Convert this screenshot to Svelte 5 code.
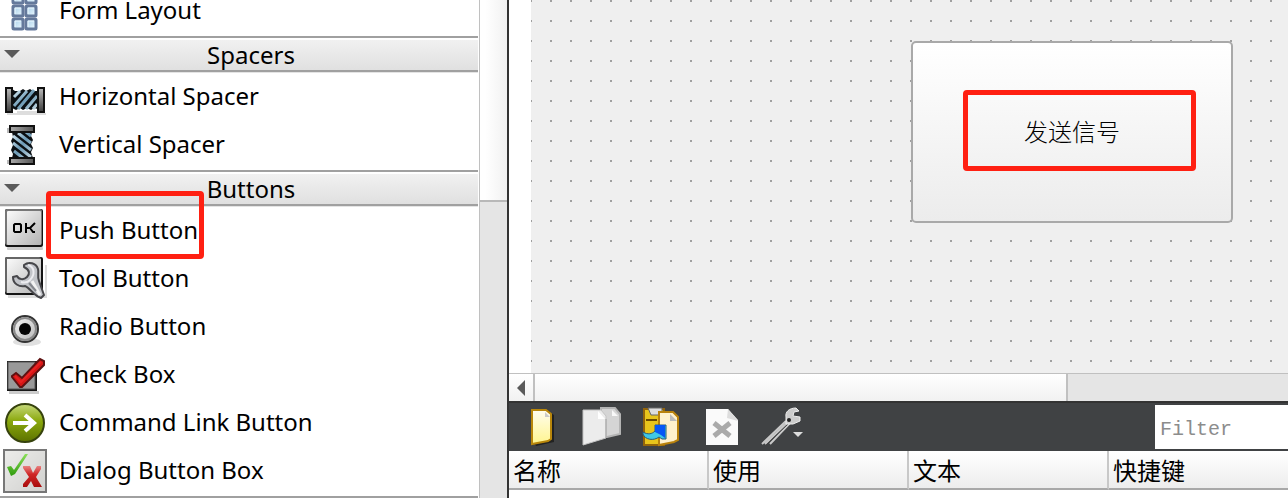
<script lang="ts">
	type WidgetItem = {
		icon: string;
		label: string;
		marked?: boolean;
	};

	type WidgetGroup = {
		title: string;
		items: WidgetItem[];
	};

	const groups: WidgetGroup[] = [
		{
			title: 'Spacers',
			items: [
				{ icon: 'hspacer', label: 'Horizontal Spacer' },
				{ icon: 'vspacer', label: 'Vertical Spacer' }
			]
		},
		{
			title: 'Buttons',
			items: [
				{ icon: 'push', label: 'Push Button', marked: true },
				{ icon: 'tool', label: 'Tool Button' },
				{ icon: 'radio', label: 'Radio Button' },
				{ icon: 'check', label: 'Check Box' },
				{ icon: 'command', label: 'Command Link Button' },
				{ icon: 'dialog', label: 'Dialog Button Box' }
			]
		}
	];

	const actions = ['new', 'copy', 'paste', 'delete', 'configure'];
	const columns = ['名称', '使用', '文本', '快捷键'];

	let filter = $state('');
	let collapsed = $state<Record<string, boolean>>({});
</script>

<svg class="defs" aria-hidden="true">
	<defs>
		<linearGradient id="metal" x1="0" y1="0" x2="0" y2="1">
			<stop offset="0" stop-color="#bbb" /><stop offset="1" stop-color="#3c3c3c" />
		</linearGradient>
		<linearGradient id="metalH" x1="0" y1="0" x2="1" y2="0">
			<stop offset="0" stop-color="#aaa" /><stop offset="1" stop-color="#555" />
		</linearGradient>
		<linearGradient id="coil" x1="0" y1="0" x2="1" y2="1">
			<stop offset="0" stop-color="#d7e9f2" /><stop offset="0.5" stop-color="#6c9ab6" /><stop offset="1" stop-color="#c2d6e0" />
		</linearGradient>
		<linearGradient id="face" x1="0" y1="0" x2="1" y2="1">
			<stop offset="0" stop-color="#fafafa" /><stop offset="1" stop-color="#b4b4b4" />
		</linearGradient>
		<linearGradient id="tile" x1="0" y1="0" x2="1" y2="1">
			<stop offset="0" stop-color="#a3cde9" /><stop offset="1" stop-color="#eefaff" />
		</linearGradient>
		<linearGradient id="green" x1="0" y1="0" x2="0" y2="1">
			<stop offset="0" stop-color="#c6d97c" /><stop offset="0.45" stop-color="#8aa80c" /><stop offset="1" stop-color="#5c7200" />
		</linearGradient>
		<linearGradient id="paper" x1="0" y1="0" x2="0" y2="1">
			<stop offset="0" stop-color="#fffdf0" /><stop offset="1" stop-color="#fff58e" />
		</linearGradient>
		<linearGradient id="tick" x1="0" y1="0" x2="0" y2="1">
			<stop offset="0" stop-color="#8be05a" /><stop offset="1" stop-color="#2f9a0c" />
		</linearGradient>
		<linearGradient id="cross" x1="0" y1="0" x2="0" y2="1">
			<stop offset="0" stop-color="#e88080" /><stop offset="0.4" stop-color="#cf2626" /><stop offset="1" stop-color="#a90d0d" />
		</linearGradient>
	</defs>
</svg>

{#snippet widgetIcon(name: string)}
	<svg class="widget-icon" viewBox="0 0 44 44" aria-hidden="true">
		{#if name === 'form'}
			{#each [3, 16, 29] as y}
				{#each [9, 22] as x}
					<rect x={x + 1} y={y + 1} width="10" height="10" rx="1" fill="url(#tile)" stroke="#64799b" stroke-width="3" />
					<path d="M{x + 3} {y + 9}V{y + 3}H{x + 9}" fill="none" stroke="#eefaff" stroke-width="1" />
				{/each}
			{/each}
		{:else if name === 'hspacer'}
			<path d="M4 38H14V36H34V38H43V40H4z" fill="#bbb" opacity="0.5" />
			<path d="M9 14l3 2h5l3-2 3 2 4-2 3 2h5v18l-4-1-3 2-4-2-4 2-3-2-4 2-4-2z" fill="#0b1014" />
			<path d="M11 22l6-6M11 31L24 16M15 34L31 15M23 34L34 21M30 34l4-5" stroke="url(#coil)" stroke-width="3" />
			<rect x="3" y="13" width="6" height="24" fill="url(#metal)" stroke="#111" stroke-width="2" />
			<rect x="35" y="13" width="6" height="24" fill="url(#metal)" stroke="#111" stroke-width="2" />
		{:else if name === 'vspacer'}
			<path d="M4 5H6V10H4zM4 37H6V41H4z" fill="#bbb" />
			<path d="M9 9H29l-1 4 2 4-2 4 2 4-2 4 2 6H9l1-4-2-4 2-5-2-4 2-4z" fill="#0b1014" />
			<path d="M10 13l18 14M10 20l18 14M11 28l9 7M15 10l13 10M23 9l5 4" stroke="url(#coil)" stroke-width="3" />
			<rect x="7" y="3" width="24" height="6" fill="url(#metalH)" stroke="#111" stroke-width="2" />
			<rect x="7" y="35" width="24" height="6" fill="url(#metalH)" stroke="#111" stroke-width="2" />
		{:else if name === 'push'}
			<rect x="4" y="38" width="36" height="3" rx="1" fill="#ccc" />
			<rect x="2" y="0" width="38" height="38" rx="2" fill="#151515" />
			<rect x="2" y="0" width="37" height="36" rx="2" fill="#777" />
			<rect x="4" y="2" width="34" height="34" rx="1" fill="url(#face)" />
			<path d="M12 15h5l1 1v6l-1 1h-5l-1-1v-6zM23 14v10M32 14l-5 5h-4M27 19l3 4h2" fill="none" stroke="#000" stroke-width="2" />
		{:else if name === 'tool'}
			<path d="M5 38H42V8h2V41H5z" fill="#ddd" />
			<rect x="2" y="0" width="38" height="38" rx="2" fill="#151515" />
			<rect x="2" y="0" width="36" height="36" rx="2" fill="#666" />
			<rect x="4" y="2" width="34" height="34" fill="url(#face)" />
			<path d="M21 8c5-4 12-2 14 4 1 4-1 8 1 12l5 14-3 3c-7-2-11-10-16-12-6 1-12-2-12-9l4-1c2 4 7 4 10 1 3-3 3-7-3-10z" fill="#c2c4c9" stroke="#47474b" stroke-width="2" stroke-linejoin="round" />
			<path d="M25 8c7 2 7 10 2 15-3 3-6 3-9 2" fill="none" stroke="#ececf0" stroke-width="2" />
			<path d="M29 24l8 14" stroke="#f2f2f2" stroke-width="3" />
			<path d="M26 26l7 8" stroke="#85878d" stroke-width="2" />
		{:else if name === 'radio'}
			<ellipse cx="24" cy="37" rx="14" ry="4" fill="#e0e0e0" />
			<circle cx="22" cy="24" r="13" fill="url(#face)" stroke="#333" stroke-width="2" />
			<circle cx="22" cy="24" r="11" fill="none" stroke="#8a8a8a" stroke-width="2" />
			<circle cx="22" cy="24" r="6" fill="#050505" />
		{:else if name === 'check'}
			<rect x="6" y="38" width="30" height="3" fill="#ccc" />
			<rect x="4" y="8" width="30" height="30" fill="#181818" />
			<rect x="5" y="9" width="27" height="27" fill="#999" stroke="#555" stroke-width="1" />
			<path d="M9 23l4-3 6 5L37 6l4 2v4L19 34h-2L9 24z" fill="#d51616" stroke="#5e1212" stroke-width="2" />
			<path d="M12 23l6 6L38 9" fill="none" stroke="#e82222" stroke-width="2" />
		{:else if name === 'command'}
			<circle cx="22" cy="22" r="19" fill="url(#green)" stroke="#36420d" stroke-width="2" />
			<path d="M10 22H30M22 14l9 8-9 8" fill="none" stroke="#fff" stroke-width="4" />
		{:else if name === 'dialog'}
			<rect x="1" y="1" width="42" height="42" fill="url(#face)" stroke="#777" stroke-width="2" />
			<rect x="2" y="2" width="40" height="40" fill="#e2e2df" opacity="0.6" />
			<path d="M4 18l4-1 3 4L22 5h3L12 25l-4 2z" fill="url(#tick)" />
			<path d="M20 17h7l3 7 4-7h4v3l-5 8 6 10h-8l-3-6-4 6h-4v-3l6-7-6-9z" fill="url(#cross)" />
		{/if}
	</svg>
{/snippet}

{#snippet actionIcon(name: string)}
	<svg class="action-icon" viewBox="0 0 40 40" aria-hidden="true">
		{#if name === 'new'}
			<path d="M29 6l3 2v27L14 39l-1-2z" fill="#222" />
			<path d="M10 3h14l5 4v25l-3 2-16 3z" fill="url(#paper)" stroke="#b8860b" stroke-width="2" />
			<path d="M23 5v5h5z" fill="#c9c9c9" />
		{:else if name === 'copy'}
			<path d="M19 1h14l5 6v20l-13 3h-6z" fill="#d5d5d5" stroke="#b4b4b4" stroke-width="2" />
			<path d="M30 3v6h6z" fill="#f8f8f8" />
			<path d="M1 3h18l5 6v22L1 38z" fill="#ececec" stroke="#c4c4c4" stroke-width="1" />
			<path d="M16 4v8h7z" fill="#fff" />
			<path d="M24 12v19" stroke="#a0a0a0" stroke-width="1" />
		{:else if name === 'paste'}
			<path d="M2 2h20v36H2z" fill="#e8c51c" stroke="#94650a" stroke-width="2" />
			<path d="M6 1h14v7H9z" fill="#ddd" stroke="#666" stroke-width="1" />
			<path d="M4 12h11v2H4z" fill="#6b4a00" />
			<path d="M17 5h14l5 5v23l-4 2-15 3z" fill="#fff1cd" stroke="#b9820d" stroke-width="2" />
			<path d="M28 7v7h7z" fill="#bbb" />
			<path d="M1 25c5 3 9 2 12-1v-6h11v14h-4l-3-2c-5 4-14 3-16-3z" fill="#3fc8e6" stroke="#285b78" stroke-width="1" />
			<path d="M13 18h10v13l-4-3-6-3z" fill="#0757f5" />
		{:else if name === 'delete'}
			<path d="M4 2H26L36 13V38H4z" fill="#fafafa" />
			<path d="M26 2l-1 9 11 3z" fill="#ddd" />
			<path d="M12 16l16 13M28 16L12 29" stroke="#aaa" stroke-width="5" />
		{:else if name === 'configure'}
			<path d="M0 37L24 14M8 37l20-21M3 37L26 15" fill="none" stroke="#c8c8c8" stroke-width="2" />
			<path d="M4 38L26 17" fill="none" stroke="#444" stroke-width="1" />
			<path d="M24 10c-1-5 3-9 10-9l3 3-5 1-1 4 7 1v4l-7 3h-7z" fill="#ccc" stroke="#eee" stroke-width="1" />
			<circle cx="27" cy="13" r="2" fill="#222" />
			<path d="M31 25h10l-5 5z" fill="#ddd" />
		{/if}
	</svg>
{/snippet}

{#snippet widgetRow(item: WidgetItem)}
	<li class="widget-row">
		{@render widgetIcon(item.icon)}
		<span>{item.label}</span>
		{#if item.marked}
			<i class="mark row-mark"></i>
		{/if}
	</li>
{/snippet}

<div class="designer">
	<aside class="widget-box">
		<div class="widget-scroll">
			<ul class="scrolled">
				{@render widgetRow({ icon: 'form', label: 'Form Layout' })}
			</ul>
			{#each groups as group}
				<button
					type="button"
					class="group-header"
					aria-expanded={!collapsed[group.title]}
					onclick={() => (collapsed[group.title] = !collapsed[group.title])}
				>
					<svg viewBox="0 0 16 8" aria-hidden="true"><path d="M0 0H16L8 8z" /></svg>
					<span>{group.title}</span>
				</button>
				{#if !collapsed[group.title]}
					<ul>
						{#each group.items as item}
							{@render widgetRow(item)}
						{/each}
					</ul>
				{/if}
			{/each}
			<div class="group-header"></div>
		</div>
		<div class="vbar"><div class="vbar-thumb"></div></div>
	</aside>

	<main class="workspace">
		<div class="form-view">
			<div class="form-canvas">
				<button type="button" class="form-button">
					发送信号
					<i class="mark button-mark"></i>
				</button>
			</div>
		</div>
		<div class="hbar">
			<button type="button" class="hbar-arrow" aria-label="Scroll left">
				<svg viewBox="0 0 8 16" aria-hidden="true"><path d="M8 0V16L0 8z" /></svg>
			</button>
			<div class="hbar-thumb"></div>
			<div class="hbar-track"></div>
		</div>
		<div class="action-toolbar">
			{#each actions as action}
				<button type="button" class="action" aria-label={action}>
					{@render actionIcon(action)}
				</button>
			{/each}
			<input type="text" placeholder="Filter" aria-label="Filter" bind:value={filter} />
		</div>
		<table class="action-table">
			<thead>
				<tr>
					{#each columns as column}
						<th scope="col">{column}</th>
					{/each}
				</tr>
			</thead>
		</table>
	</main>
</div>

<style>
	:global(body) { margin: 0; background: #ffffff; }
	.defs { position: absolute; width: 0; height: 0; }
	button { padding: 0; border: 0; background: none; color: #000000; font: inherit; }
	ul { margin: 0; padding: 1px 0; list-style: none; }

	.designer {
		display: flex;
		height: 100vh;
		overflow: hidden;
		color: #000000;
		font-family: 'Noto Sans', 'Noto Sans CJK SC', sans-serif;
		font-size: 24px;
	}

	.widget-box { display: flex; flex: 0 0 507px; border-right: 2px solid #333333; }
	.widget-scroll { flex: 1; min-width: 0; overflow: hidden; padding-right: 1px; }
	.scrolled { margin-top: -14px; }
	.group-header {
		position: relative;
		display: flex;
		align-items: center;
		justify-content: center;
		width: 100%;
		height: 36px;
		padding-left: 24px;
		box-sizing: border-box;
		border-top: 2px solid #a0a0a0;
		border-bottom: 2px solid #a0a0a0;
		background: linear-gradient(#f2f2f2, #e0e0e0);
		box-shadow: inset 0 2px #ffffff, 0 1px #e4e4e4;
	}
	.group-header svg { position: absolute; left: 4px; top: 12px; width: 16px; height: 8px; fill: #5a5a5a; }
	.widget-row {
		position: relative;
		display: flex;
		align-items: center;
		gap: 12px;
		height: 48px;
		padding-left: 3px;
		line-height: 24px;
		white-space: nowrap;
	}
	.widget-row span { padding-bottom: 2px; }
	.widget-icon { flex: none; width: 44px; height: 44px; }
	.vbar { flex: 0 0 27px; border-left: 1px solid #c0c0c0; background: #e5e5e5; }
	.vbar-thumb { height: 200px; border-bottom: 2px solid #b8b8b8; background: linear-gradient(90deg, #ffffff 20%, #f1f1f1); }

	.mark { position: absolute; box-sizing: border-box; border: 5px solid #ff2012; border-radius: 4px; pointer-events: none; }
	.row-mark { left: 46px; top: -16px; width: 158px; height: 68px; }
	.button-mark { left: 50px; top: 47px; width: 233px; height: 81px; }

	.workspace { display: flex; flex: 1; flex-direction: column; min-width: 0; }
	.form-view { flex: 1; min-height: 0; padding-left: 22px; background: #ffffff; }
	.form-canvas {
		position: relative;
		height: 100%;
		overflow: hidden;
		background: conic-gradient(from 270deg at 2px 2px, #a0a0a0 90deg, #efefef 0) -1px 0 / 20px 20px;
	}
	.form-button {
		position: absolute;
		left: 380px;
		top: 41px;
		width: 322px;
		height: 182px;
		padding-bottom: 4px;
		border: 2px solid #a9a9a9;
		border-radius: 5px;
		background: linear-gradient(#ffffff, #ececec);
		font-family: 'Noto Sans CJK SC', sans-serif;
		font-weight: 300;
	}

	.hbar { display: flex; flex: 0 0 27px; border-top: 1px solid #c0c0c0; border-bottom: 2px solid #333333; background: #e5e5e5; }
	.hbar-arrow, .hbar-thumb { border-right: 2px solid #c0c0c0; background: linear-gradient(#ffffff, #f1f1f1); box-sizing: border-box; }
	.hbar-arrow { display: flex; align-items: center; justify-content: center; flex: 0 0 26px; }
	.hbar-arrow svg { width: 8px; height: 16px; fill: #5a5a5a; }
	.hbar-thumb { flex: 532; }
	.hbar-track { flex: 220; }

	.action-toolbar { display: flex; align-items: center; flex: 0 0 48px; padding-left: 3px; background: #404244; }
	.action { display: flex; align-items: center; justify-content: center; flex: 0 0 60px; height: 48px; }
	.action-icon { width: 40px; height: 40px; overflow: visible; }
	input {
		width: 133px;
		height: 44px;
		margin-left: auto;
		padding: 4px 5px 0;
		box-sizing: border-box;
		border: 0;
		border-radius: 0;
		outline: 0;
		background: #ffffff;
		font: 20px 'Liberation Mono', monospace;
	}
	input::placeholder { color: #8c8c8c; opacity: 1; }

	.action-table { width: 100%; margin-bottom: 8px; border-collapse: separate; border-spacing: 0; table-layout: fixed; }
	th {
		width: 200px;
		height: 39px;
		padding: 2px 0 0 4px;
		box-sizing: border-box;
		border-right: 2px solid #c8c8c8;
		border-bottom: 2px solid #a8a8a8;
		background: linear-gradient(#ffffff, #ededed);
		font-weight: 400;
		line-height: 35px;
		text-align: left;
	}
	th:last-child { width: auto; border-right: 0; }
</style>
